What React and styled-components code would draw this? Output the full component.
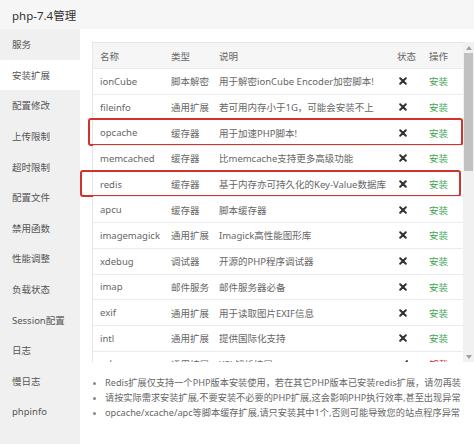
import styled, { createGlobalStyle } from 'styled-components';

const GlobalStyle = createGlobalStyle`
  html, body {
    margin: 0;
    padding: 0;
    background: #fff;
  }
  body {
    font-family: "Noto Sans", "Noto Sans CJK SC", sans-serif;
  }
  * {
    box-sizing: border-box;
  }
`;

const menus = [
  '服务',
  '安装扩展',
  '配置修改',
  '上传限制',
  '超时限制',
  '配置文件',
  '禁用函数',
  '性能调整',
  '负载状态',
  'Session配置',
  '日志',
  '慢日志',
  'phpinfo',
];

const exts = [
  { name: 'ionCube', type: '脚本解密', desc: '用于解密ionCube Encoder加密脚本!' },
  { name: 'fileinfo', type: '通用扩展', desc: '若可用内存小于1G，可能会安装不上' },
  { name: 'opcache', type: '缓存器', desc: '用于加速PHP脚本!', mark: 'near' },
  { name: 'memcached', type: '缓存器', desc: '比memcache支持更多高级功能' },
  { name: 'redis', type: '缓存器', desc: '基于内存亦可持久化的Key-Value数据库', mark: 'wide' },
  { name: 'apcu', type: '缓存器', desc: '脚本缓存器' },
  { name: 'imagemagick', type: '通用扩展', desc: 'Imagick高性能图形库' },
  { name: 'xdebug', type: '调试器', desc: '开源的PHP程序调试器' },
  { name: 'imap', type: '邮件服务', desc: '邮件服务器必备' },
  { name: 'exif', type: '通用扩展', desc: '用于读取图片EXIF信息' },
  { name: 'intl', type: '通用扩展', desc: '提供国际化支持' },
  { name: 'xsl', type: '通用扩展', desc: 'XSL解析扩展', installed: true },
];

const notes = [
  'Redis扩展仅支持一个PHP版本安装使用，若在其它PHP版本已安装redis扩展，请勿再装',
  '请按实际需求安装扩展,不要安装不必要的PHP扩展,这会影响PHP执行效率,甚至出现异常',
  'opcache/xcache/apc等脚本缓存扩展,请只安装其中1个,否则可能导致您的站点程序异常',
];

const Page = styled.div`
  width: 474px;
  height: 444px;
  display: grid;
  grid-template-columns: 80px 1fr;
  grid-template-rows: 29px 1fr;
  overflow: hidden;
`;

const TitleBar = styled.div`
  grid-column: 1 / 3;
  display: flex;
  align-items: center;
  padding-left: 12px;
  background: #f6f6f6;
  color: #333;
  font-size: 11.5px;
`;

const SideMenu = styled.ul`
  list-style: none;
  margin: 0;
  padding: 0;
  background: #f0f0f0;
`;

const MenuItem = styled.li`
  height: 30.6px;
  display: flex;
  align-items: center;
  padding-left: 12px;
  font-size: 9.5px;
  color: #555;
  background: ${({ $active }) => ($active ? '#fff' : 'transparent')};
`;

const Content = styled.div`
  display: flex;
  flex-direction: column;
  padding-top: 13px;
  min-width: 0;
`;

const ScrollFrame = styled.div`
  display: flex;
  height: 320px;
`;

const Viewport = styled.div`
  flex: 1;
  overflow: hidden;
  padding-left: 12px;
`;

const Table = styled.div`
  border-top: 1px solid #e6e6e6;
  border-left: 1px solid #e6e6e6;
  font-size: 9.5px;
  color: #666;
`;

const Row = styled.div`
  position: relative;
  display: grid;
  grid-template-columns: 71px 48px 178px 32px 41px;
  align-items: center;
  height: ${({ $head }) => ($head ? '25px' : '25.7px')};
  background: ${({ $head }) => ($head ? '#f6f6f6' : '#fff')};
  border-top: ${({ $head }) => ($head ? 'none' : '1px solid #ebebeb')};

  &::after {
    content: '';
    display: ${({ $mark }) => ($mark ? 'block' : 'none')};
    position: absolute;
    top: -2px;
    bottom: -1px;
    left: ${({ $mark }) => ($mark === 'wide' ? '-13px' : '-5px')};
    right: ${({ $mark }) => ($mark === 'wide' ? '2px' : '0')};
    border: 2px solid #d3322c;
    border-radius: 3px;
  }
`;

const Cell = styled.div`
  padding-left: 7px;
  white-space: nowrap;
  overflow: hidden;
`;

const StatusCell = styled(Cell)`
  padding-left: 9px;
  display: flex;
  align-items: center;
`;

const Action = styled(Cell)`
  color: ${({ $remove }) => ($remove ? '#d0302c' : '#3aa54a')};
`;

const ScrollBar = styled.div`
  width: 11px;
  display: flex;
  flex-direction: column;
  background: #f1f1f1;
`;

const ArrowBtn = styled.div`
  height: 11px;
  display: flex;
  align-items: center;
  justify-content: center;
`;

const Track = styled.div`
  flex: 1;
  padding: 0 1px;
`;

const Thumb = styled.div`
  height: 118px;
  background: #c1c1c1;
`;

const Notes = styled.ul`
  list-style: none;
  margin: 14px 0 0;
  padding: 0 11px 0 12px;
  font-size: 9.2px;
  color: #666;
`;

const Note = styled.li`
  position: relative;
  height: 14.8px;
  line-height: 14.8px;
  padding-left: 13px;
  white-space: nowrap;
  overflow: hidden;

  &::before {
    content: '';
    position: absolute;
    left: 1px;
    top: 6px;
    width: 3px;
    height: 3px;
    border-radius: 50%;
    background: #888;
  }
`;

function Cross() {
  return (
    <svg width="8" height="8" viewBox="0 0 8 8">
      <path d="M1.2 1.2 L6.8 6.8 M6.8 1.2 L1.2 6.8" stroke="#333" strokeWidth="2" strokeLinecap="round" />
    </svg>
  );
}

function Check() {
  return (
    <svg width="9" height="8" viewBox="0 0 9 8">
      <path d="M1 4.5 L3.5 7 L8 1" stroke="#333" strokeWidth="1.8" fill="none" strokeLinecap="round" />
    </svg>
  );
}

function Arrow({ down }) {
  return (
    <svg width="6" height="4" viewBox="0 0 6 4">
      <path d={down ? 'M0 0 L6 0 L3 4 Z' : 'M0 4 L6 4 L3 0 Z'} fill="#a0a0a0" />
    </svg>
  );
}

export default function App() {
  return (
    <>
      <GlobalStyle />
      <Page>
        <TitleBar>php-7.4管理</TitleBar>
        <SideMenu>
          {menus.map((m) => (
            <MenuItem key={m} $active={m === '安装扩展'}>
              {m}
            </MenuItem>
          ))}
        </SideMenu>
        <Content>
          <ScrollFrame>
            <Viewport>
              <Table>
                <Row $head>
                  <Cell>名称</Cell>
                  <Cell>类型</Cell>
                  <Cell>说明</Cell>
                  <Cell>状态</Cell>
                  <Cell>操作</Cell>
                </Row>
                {exts.map((e) => (
                  <Row key={e.name} $mark={e.mark}>
                    <Cell>{e.name}</Cell>
                    <Cell>{e.type}</Cell>
                    <Cell>{e.desc}</Cell>
                    <StatusCell>{e.installed ? <Check /> : <Cross />}</StatusCell>
                    <Action $remove={e.installed}>{e.installed ? '卸载' : '安装'}</Action>
                  </Row>
                ))}
              </Table>
            </Viewport>
            <ScrollBar>
              <ArrowBtn>
                <Arrow />
              </ArrowBtn>
              <Track>
                <Thumb />
              </Track>
              <ArrowBtn>
                <Arrow down />
              </ArrowBtn>
            </ScrollBar>
          </ScrollFrame>
          <Notes>
            {notes.map((n) => (
              <Note key={n}>{n}</Note>
            ))}
          </Notes>
        </Content>
      </Page>
    </>
  );
}
